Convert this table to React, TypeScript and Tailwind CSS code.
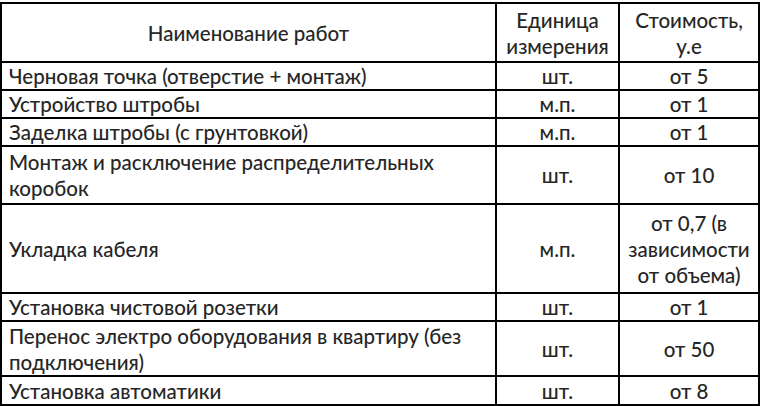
import React from "react";

const rows: { name: React.ReactNode; unit: string; price: React.ReactNode; h: number }[] = [
  { name: "Черновая точка (отверстие + монтаж)", unit: "шт.", price: "от 5", h: 28 },
  { name: "Устройство штробы", unit: "м.п.", price: "от 1", h: 27 },
  { name: "Заделка штробы (с грунтовкой)", unit: "м.п.", price: "от 1", h: 27 },
  {
    name: (
      <>
        Монтаж и расключение распределительных
        <br />
        коробок
      </>
    ),
    unit: "шт.",
    price: "от 10",
    h: 58,
  },
  {
    name: "Укладка кабеля",
    unit: "м.п.",
    price: (
      <>
        от 0,7 (в
        <br />
        зависимости
        <br />
        от объема)
      </>
    ),
    h: 89,
  },
  { name: "Установка чистовой розетки", unit: "шт.", price: "от 1", h: 28 },
  {
    name: (
      <>
        Перенос электро оборудования в квартиру (без
        <br />
        подключения)
      </>
    ),
    unit: "шт.",
    price: "от 50",
    h: 55,
  },
  { name: "Установка автоматики", unit: "шт.", price: "от 8", h: 29 },
];

export default function App() {
  return (
    <div className="w-[762px] h-[406px] bg-white pt-[2px] overflow-hidden">
      <table
        className="border-collapse text-[20.5px] leading-[26px] text-[#262626] font-medium"
        style={{ fontFamily: "Lato, 'Open Sans', 'Noto Sans', sans-serif" }}
      >
        <colgroup>
          <col className="w-[495px]" />
          <col className="w-[123px]" />
          <col className="w-[140px]" />
        </colgroup>
        <thead>
          <tr className="h-[59px]">
            <th className="border-2 border-black font-medium text-center align-middle">
              Наименование работ
            </th>
            <th className="border-2 border-black font-medium text-center align-middle">
              Единица
              <br />
              измерения
            </th>
            <th className="border-2 border-black font-medium text-center align-middle">
              Стоимость,
              <br />
              у.е
            </th>
          </tr>
        </thead>
        <tbody>
          {rows.map((r, i) => (
            <tr key={i} style={{ height: r.h }}>
              <td className="border-2 border-black pl-[7px] align-middle p-0 whitespace-nowrap">{r.name}</td>
              <td className="border-2 border-black text-center align-middle p-0">{r.unit}</td>
              <td className="border-2 border-black text-center align-middle p-0">{r.price}</td>
            </tr>
          ))}
        </tbody>
      </table>
    </div>
  );
}
